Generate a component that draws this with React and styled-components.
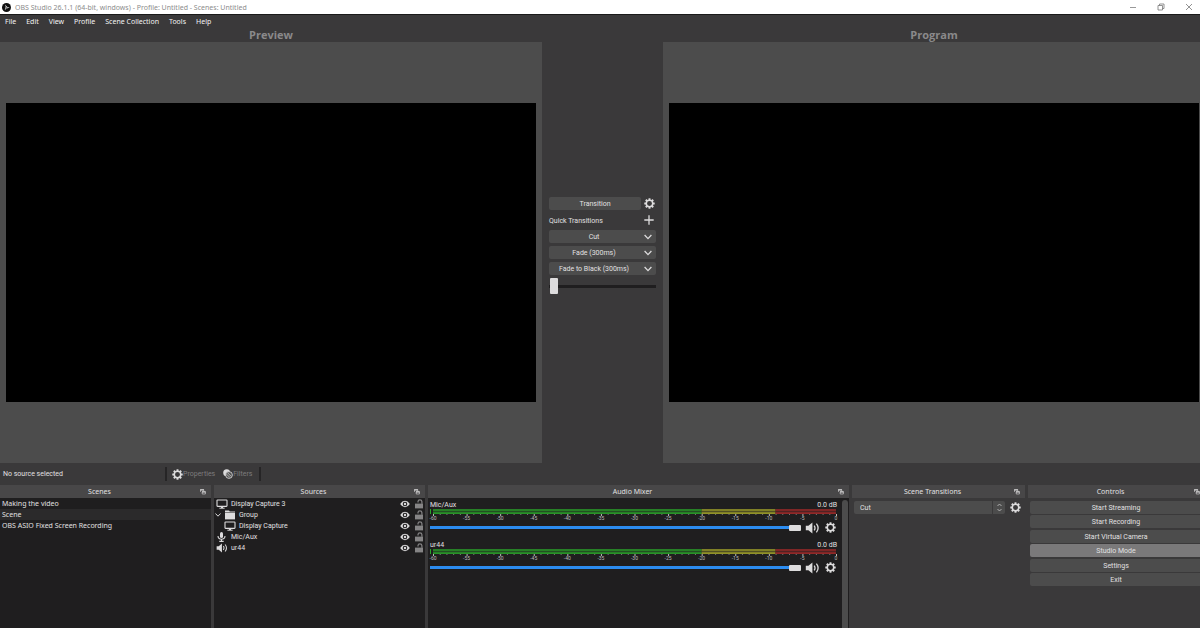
import React from 'react';
import styled, { createGlobalStyle, css } from 'styled-components';

const color = {
  window: '#3a393a',
  panel: '#4c4c4c',
  header: '#484748',
  list: '#1f1e1f',
  selected: '#2b2a2b',
  text: '#e1e0e1',
  muted: '#7d7c7d',
  light: '#dddcdd',
};

const font = {
  wide: '7px/11px "Noto Sans", "Open Sans", sans-serif',
  compact: '7px/11px Roboto, "Open Sans", sans-serif',
};

const GlobalStyle = createGlobalStyle`
  *, *::before, *::after { box-sizing: border-box; }
  body {
    margin: 0;
    overflow: hidden;
    background: ${color.window};
    color: ${color.text};
    font: ${font.compact};
  }
  button, select, input { font: inherit; color: inherit; margin: 0; padding: 0; border: 0; }
  ul, h1, h2, p { margin: 0; padding: 0; list-style: none; font: inherit; }
  svg { display: block; flex: none; }
`;

/* ---------- icons ---------- */

const GearIcon = ({ size = 12 }) => (
  <svg width={size} height={size} viewBox="0 0 16 16" stroke={color.light} fill="none">
    <circle cx="8" cy="8" r="4.7" strokeWidth="2.2" />
    {[0, 45, 90, 135, 180, 225, 270, 315].map((a) => (
      <path key={a} d="M8 .4V3.2" strokeWidth="2.8" transform={`rotate(${a} 8 8)`} />
    ))}
  </svg>
);

const PlusIcon = () => (
  <svg width="10" height="10" viewBox="0 0 10 10" stroke={color.light} strokeWidth="1.3">
    <path d="M5 .3V9.7M.3 5H9.7" />
  </svg>
);

const ChevronIcon = ({ width = 8 }) => (
  <svg width={width} height="6" viewBox="0 0 8 6" fill="none" stroke={color.light} strokeWidth="1.3">
    <path d="M.6 1L4 4.6L7.4 1" />
  </svg>
);

const PopOutIcon = () => (
  <svg width="6" height="6" viewBox="0 0 6 6" fill="none" stroke={color.light} strokeWidth=".6">
    <path d="M.4 3V.8H3.8V1.8" />
    <path d="M2.2 2.8H5.4V5H2.2Z" />
    <path d="M.1 .9H4M2 2.9H5.7" strokeWidth="1" />
  </svg>
);

const MonitorIcon = () => (
  <svg width="12" height="10" viewBox="0 0 12 10" fill="none" stroke={color.light}>
    <rect x="1" y="1" width="10" height="6.4" rx=".6" strokeWidth="1.1" />
    <path d="M3.4 9.2H8.6" strokeWidth="1" />
    <path d="M6 7.5V9" strokeWidth="2" />
  </svg>
);

const FolderIcon = () => (
  <svg width="12" height="10" viewBox="0 0 12 10" fill={color.light}>
    <path d="M1 2V.6H5L5.8 1.4H11V2.4H1Z" />
    <path d="M1 3H11V9.4H1Z" />
  </svg>
);

const MicIcon = () => (
  <svg width="12" height="10" viewBox="0 0 12 10" fill="none" stroke={color.light}>
    <rect x="4" y="0" width="3" height="6" rx="1.5" fill={color.light} stroke="none" />
    <path d="M2 4Q2.2 7.3 5.5 7.3Q8.8 7.3 9 4M5.5 7.3V9.4M3.3 9.4H7.7" strokeWidth="1.1" />
  </svg>
);

const SpeakerIcon = ({ width = 12, height = 10 }) => (
  <svg width={width} height={height} viewBox="0 0 15 12" fill="none" stroke={color.light}>
    <path d="M.8 3.8H3.4L7.4 .4V11.6L3.4 8.2H.8Z" fill={color.light} stroke="none" />
    <path d="M9.2 3.6Q10.8 6 9.2 8.4M11.4 1.6Q14.8 6 11.4 10.4" strokeWidth="1.3" />
  </svg>
);

const EyeIcon = () => (
  <svg width="10" height="8" viewBox="0 0 10 8">
    <path d="M.2 4Q2.2 .7 5 .7Q7.8 .7 9.8 4Q7.8 7.3 5 7.3Q2.2 7.3 .2 4Z" fill={color.light} />
    <circle cx="5" cy="4" r="2.3" fill={color.list} />
    <circle cx="5" cy="4" r="1.2" fill={color.light} />
  </svg>
);

const LockIcon = () => (
  <svg width="8" height="10" viewBox="0 0 8 10" fill="none" stroke="#858485">
    <path d="M0 4.6H8V9.4H0Z" fill="#858485" stroke="none" />
    <path d="M3 3.4V2.6Q3.1 .9 4.9 .9Q6.8 .9 6.9 2.6V4.8" strokeWidth="1.2" />
  </svg>
);

const FiltersIcon = () => (
  <svg width="10" height="10" viewBox="0 0 10 10" fill="none">
    <circle cx="3.7" cy="3.7" r="3.5" fill={color.light} />
    <circle cx="6" cy="6" r="3.4" stroke={color.light} strokeWidth=".8" fill="#555" />
    <path d="M3.6 5.2L6.8 8.4M4.6 3.8L8.2 7.4" stroke={color.light} strokeWidth=".7" />
  </svg>
);

const ObsLogo = () => (
  <svg width="9" height="9" viewBox="0 0 18 18">
    <circle cx="9" cy="9" r="9" fill="#111" />
    {[0, 120, 240].map((a) => (
      <path
        key={a}
        d="M8.6 8.4Q5 7 6.6 3.2Q6.8 6 9.4 6.4Q11 7 10.2 9Z"
        fill="#ddd"
        transform={`rotate(${a} 9 9)`}
      />
    ))}
  </svg>
);

/* ---------- window chrome ---------- */

const Window = styled.div`
  display: flex;
  flex-direction: column;
  width: calc(100% + 5px);
  min-height: 100vh;
`;

const TitleBar = styled.header`
  display: flex;
  align-items: center;
  gap: 4px;
  height: 15px;
  padding: 0 12px 0 2px;
  background: #fff;
  color: #8c8c8c;
  border-bottom: 1px solid #1a1a1a;
  font: ${font.wide};
`;

const WindowTitle = styled.h1`
  flex: 1;
`;

const WindowButtons = styled.div`
  display: flex;
  gap: 20px;
`;

const WindowButton = styled.button`
  background: none;
  width: 8px;
  height: 8px;
`;

const MenuBar = styled.nav`
  display: flex;
  gap: 10px;
  height: 13px;
  padding: 0 5px;
  font: ${font.wide};
`;

const MenuItem = styled.button`
  background: none;
  color: #f4f4f4;
`;

/* ---------- studio area ---------- */

const Studio = styled.main`
  flex: 1;
  display: grid;
  grid-template-columns: 1fr 121px 1fr;
`;

const View = styled.section`
  display: flex;
  flex-direction: column;
`;

const ViewTitle = styled.h2`
  height: 14px;
  text-align: center;
  font: bold 11px/14px "Open Sans", "Noto Sans", sans-serif;
  color: #8a898a;
`;

const Stage = styled.div`
  flex: 1;
  display: grid;
  align-items: center;
  padding: 0 6px;
  background: ${color.panel};
`;

const Canvas = styled.div`
  aspect-ratio: 16 / 9;
  background: #000;
`;

const TransitionColumn = styled.section`
  display: flex;
  flex-direction: column;
  justify-content: center;
  gap: 3px;
  padding: 0 7px;
`;

const Row = styled.div`
  display: flex;
  align-items: center;
  justify-content: space-between;
  gap: 1px;
  height: ${(p) => p.$height}px;
`;

const RowLabel = styled.span`
  padding-top: 2px;
`;

const Button = styled.button`
  position: relative;
  display: flex;
  align-items: center;
  justify-content: center;
  flex: ${(p) => (p.$grow ? 1 : 'none')};
  height: 13px;
  padding-top: 1px;
  padding-right: ${(p) => (p.$menu ? 17 : 0)}px;
  border-radius: 2px;
  background: ${(p) => (p.$active ? '#7a797a' : color.panel)};
  color: ${color.text};
`;

const ButtonArrow = styled.span`
  position: absolute;
  right: 4px;
`;

const IconButton = styled.button`
  display: grid;
  place-items: center;
  width: ${(p) => p.$size || 14}px;
  height: ${(p) => p.$height || 13}px;
  background: none;
`;

const thumb = css`
  appearance: none;
  border: 0;
  border-radius: 1px;
  background: ${color.light};
`;

const TBar = styled.input`
  appearance: none;
  height: 16px;
  width: 100%;
  padding-left: 1px;
  background: linear-gradient(#1f1e1f, #1f1e1f) center / 100% 3px no-repeat;
  &::-webkit-slider-thumb {
    ${thumb}
    width: 8px;
    height: 16px;
  }
`;

/* ---------- source toolbar ---------- */

const SourceBar = styled.div`
  display: flex;
  align-items: center;
  height: 22px;
  padding: 0 3px;
`;

const SourceName = styled.p`
  width: 162px;
`;

const Divider = styled.span`
  width: 2px;
  height: 14px;
  background: #262526;
`;

const ToolButton = styled.button`
  display: flex;
  align-items: center;
  background: none;
  color: ${color.muted};
`;

const Tools = styled.div`
  display: flex;
  gap: 8px;
  padding: 0 7px 0 5px;
`;

/* ---------- docks ---------- */

const Docks = styled.div`
  display: grid;
  grid-template-columns: 211fr 211fr 421fr 173fr 177fr;
  gap: 3px;
  height: 143px;
`;

const DockFrame = styled.section`
  display: flex;
  flex-direction: column;
  min-width: 0;
`;

const DockHeader = styled.header`
  display: flex;
  align-items: center;
  height: 13px;
  padding-right: 4px;
  background: ${color.header};
  font: ${font.wide};
`;

const DockTitle = styled.h2`
  flex: 1;
  text-align: center;
`;

const DockBody = styled.div`
  flex: 1;
  display: flex;
  background: ${(p) => (p.$plain ? 'none' : color.list)};
`;

const Dock = ({ title, plain, children }) => (
  <DockFrame>
    <DockHeader>
      <DockTitle>{title}</DockTitle>
      <IconButton $size={8} $height={8} aria-label={`Float ${title}`}>
        <PopOutIcon />
      </IconButton>
    </DockHeader>
    <DockBody $plain={plain}>{children}</DockBody>
  </DockFrame>
);

const List = styled.ul`
  flex: 1;
`;

const SceneItem = styled.li`
  height: 11px;
  padding-left: 2px;
  background: ${(p) => (p.$selected ? color.selected : 'none')};
  font: ${font.wide};
`;

const SourceItem = styled.li`
  display: flex;
  align-items: center;
  gap: 3px;
  height: 11px;
  padding-left: ${(p) => p.$indent}px;
`;

const SourceLabel = styled.span`
  flex: 1;
  padding-top: 1px;
`;

const MixerList = styled.div`
  flex: 1;
  padding: 0 4px 0 2px;
`;

const Channel = styled.div`
  height: 40px;
  padding-top: 1px;
`;

const ChannelControls = styled.div`
  display: flex;
  align-items: center;
  gap: 3px;
  height: 12px;
  padding-top: 1px;
`;

const Volume = styled.input`
  appearance: none;
  flex: 1;
  height: 7px;
  background: linear-gradient(#2c8cf0, #2c8cf0) center / 100% 3px no-repeat;
  &::-webkit-slider-thumb {
    ${thumb}
    width: 12px;
    height: 6px;
  }
`;

const Scrollbar = styled.div`
  width: 8px;
  padding: 2px 1px 0;
`;

const ScrollHandle = styled.div`
  height: 100%;
  border-radius: 3px 3px 0 0;
  background: ${color.panel};
`;

const TransitionForm = styled.div`
  flex: 1;
  display: flex;
  gap: 3px;
  padding: 3px 3px 0 2px;
`;

const SelectBox = styled.div`
  position: relative;
  flex: 1;
  height: 13px;
`;

const Select = styled.select`
  appearance: none;
  width: 100%;
  height: 13px;
  padding: 1px 0 0 6px;
  border-radius: 2px;
  background: ${color.panel};
`;

const SelectArrows = styled.span`
  position: absolute;
  top: 0;
  right: 0;
  display: grid;
  place-items: center;
  width: 13px;
  height: 13px;
  border-left: 1px solid ${color.window};
  pointer-events: none;
`;

const ControlList = styled.div`
  flex: 1;
  display: grid;
  align-content: start;
  grid-template-rows: repeat(3, 14px 15px);
  padding: 3px 3px 0 2px;
`;

/* ---------- meter ---------- */

const MeterScale = styled.svg`
  overflow: visible;
`;

const meterX = (db) => `${((3 + (404 * (db + 60)) / 60) / 408) * 100}%`;
const ZONES = [
  [-60, -20, '#267f26', '#2aa52a'],
  [-20, -9, '#7f7f26', '#a3a32a'],
  [-9, 0, '#7f2626', '#a32a2a'],
];

const Meter = () => (
  <MeterScale width="100%" height="12" aria-hidden="true">
    <rect x="0" y="0" width="1" height="5" fill="#2aa52a" />
    {ZONES.map(([from, to, dark, lit]) => {
      const w = `${(((to - from) / 60) * 404 / 408) * 100}%`;
      return (
        <g key={from}>
          <rect x={meterX(from)} y="0" width={w} height="5" fill={dark} />
          <rect x={meterX(from)} y="2" width={w} height="1" fill={color.list} fillOpacity=".5" />
          <rect x={meterX(from)} y="4" width={w} height="1" fill={lit} fillOpacity=".5" />
        </g>
      );
    })}
    {Array.from({ length: 61 }, (_, i) => i - 60).map((db) => (
      <rect key={db} x={meterX(db)} y="5" width="1" height={db % 5 ? 1 : 2} fill={db % 5 ? '#777' : '#bbb'} />
    ))}
    {Array.from({ length: 13 }, (_, i) => i * 5 - 60).map((db) => (
      <text key={db} x={meterX(db)} y="11" fontSize="5" textAnchor="middle" fill="#bbb">
        {db}
      </text>
    ))}
  </MeterScale>
);

const MixerChannel = ({ name }) => (
  <Channel>
    <Row $height={10}>
      <RowLabel>{name}</RowLabel>
      <RowLabel>0.0 dB</RowLabel>
    </Row>
    <Meter />
    <ChannelControls>
      <Volume type="range" defaultValue="100" aria-label={`${name} volume`} />
      <IconButton $size={16} $height={12} aria-label={`Mute ${name}`}>
        <SpeakerIcon width={15} height={12} />
      </IconButton>
      <IconButton $size={14} $height={12} aria-label={`${name} settings`}>
        <GearIcon size={11} />
      </IconButton>
    </ChannelControls>
  </Channel>
);

/* ---------- data ---------- */

const MENUS = ['File', 'Edit', 'View', 'Profile', 'Scene Collection', 'Tools', 'Help'];
const QUICK = ['Cut', 'Fade (300ms)', 'Fade to Black (300ms)'];
const SCENES = ['Making the video', 'Scene', 'OBS ASIO Fixed Screen Recording'];
const SOURCES = [
  { name: 'Display Capture 3', Icon: MonitorIcon, indent: 2 },
  { name: 'Group', Icon: FolderIcon, indent: 1, open: true },
  { name: 'Display Capture', Icon: MonitorIcon, indent: 10 },
  { name: 'Mic/Aux', Icon: MicIcon, indent: 2 },
  { name: 'ur44', Icon: SpeakerIcon, indent: 2 },
];
const CONTROLS = ['Start Streaming', 'Start Recording', 'Start Virtual Camera', 'Studio Mode', 'Settings', 'Exit'];

export default function App() {
  return (
    <>
      <GlobalStyle />
      <Window>
        <TitleBar>
          <ObsLogo />
          <WindowTitle>OBS Studio 26.1.1 (64-bit, windows) - Profile: Untitled - Scenes: Untitled</WindowTitle>
          <WindowButtons>
            <WindowButton aria-label="Minimize">
              <svg width="8" height="8" viewBox="0 0 8 8" stroke="#999"><path d="M1 4.5H7" /></svg>
            </WindowButton>
            <WindowButton aria-label="Restore">
              <svg width="8" height="8" viewBox="0 0 8 8" stroke="#777" fill="none" strokeWidth=".8">
                <path d="M1 2.5H5.5V7H1ZM2.5 2.5V1H7V5.5H5.5" />
              </svg>
            </WindowButton>
            <WindowButton aria-label="Close">
              <svg width="8" height="8" viewBox="0 0 8 8" stroke="#777" strokeWidth=".8"><path d="M1 1L7 7M7 1L1 7" /></svg>
            </WindowButton>
          </WindowButtons>
        </TitleBar>

        <MenuBar>
          {MENUS.map((m) => <MenuItem key={m}>{m}</MenuItem>)}
        </MenuBar>

        <Studio>
          <View>
            <ViewTitle>Preview</ViewTitle>
            <Stage><Canvas /></Stage>
          </View>
          <TransitionColumn>
            <Row $height={13}>
              <Button $grow>Transition</Button>
              <IconButton aria-label="Transition settings"><GearIcon size={11} /></IconButton>
            </Row>
            <Row $height={14}>
              <RowLabel>Quick Transitions</RowLabel>
              <IconButton aria-label="Add quick transition"><PlusIcon /></IconButton>
            </Row>
            {QUICK.map((q) => (
              <Button key={q} $menu>
                {q}
                <ButtonArrow><ChevronIcon /></ButtonArrow>
              </Button>
            ))}
            <TBar type="range" defaultValue="0" aria-label="Transition position" />
          </TransitionColumn>
          <View>
            <ViewTitle>Program</ViewTitle>
            <Stage><Canvas /></Stage>
          </View>
        </Studio>

        <SourceBar>
          <SourceName>No source selected</SourceName>
          <Divider />
          <Tools>
            <ToolButton><GearIcon size={11} />Properties</ToolButton>
            <ToolButton><FiltersIcon />Filters</ToolButton>
          </Tools>
          <Divider />
        </SourceBar>

        <Docks>
          <Dock title="Scenes">
            <List>
              {SCENES.map((s) => <SceneItem key={s} $selected={s === 'Scene'}>{s}</SceneItem>)}
            </List>
          </Dock>
          <Dock title="Sources">
            <List>
              {SOURCES.map(({ name, Icon, indent, open }) => (
                <SourceItem key={name} $indent={indent}>
                  {open && <ChevronIcon width={6} />}
                  <Icon />
                  <SourceLabel>{name}</SourceLabel>
                  <IconButton $size={10} $height={10} aria-label={`Hide ${name}`}><EyeIcon /></IconButton>
                  <IconButton $size={12} $height={10} aria-label={`Lock ${name}`}><LockIcon /></IconButton>
                </SourceItem>
              ))}
            </List>
          </Dock>
          <Dock title="Audio Mixer">
            <MixerList>
              <MixerChannel name="Mic/Aux" />
              <MixerChannel name="ur44" />
            </MixerList>
            <Scrollbar><ScrollHandle /></Scrollbar>
          </Dock>
          <Dock title="Scene Transitions" plain>
            <TransitionForm>
              <SelectBox>
                <Select aria-label="Scene transition" defaultValue="Cut">
                  <option>Cut</option>
                  <option>Fade</option>
                </Select>
                <SelectArrows>
                  <svg width="5" height="9" viewBox="0 0 5 9" fill="none" stroke="#bbb" strokeWidth=".9">
                    <path d="M.5 3L2.5 1L4.5 3M.5 6L2.5 8L4.5 6" />
                  </svg>
                </SelectArrows>
              </SelectBox>
              <IconButton aria-label="Transition properties"><GearIcon size={11} /></IconButton>
            </TransitionForm>
          </Dock>
          <Dock title="Controls" plain>
            <ControlList>
              {CONTROLS.map((c) => <Button key={c} $active={c === 'Studio Mode'}>{c}</Button>)}
            </ControlList>
          </Dock>
        </Docks>
      </Window>
    </>
  );
}
